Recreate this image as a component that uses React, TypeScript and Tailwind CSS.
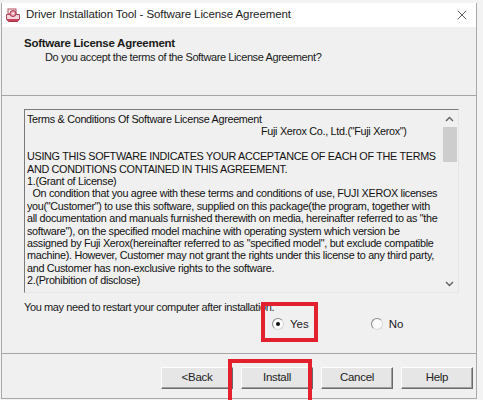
import { X } from 'lucide-react'

const licenseLines = [
  'Terms & Conditions Of Software License Agreement',
  'Fuji Xerox Co., Ltd.("Fuji Xerox")',
  '',
  'USING THIS SOFTWARE INDICATES YOUR ACCEPTANCE OF EACH OF THE TERMS',
  'AND CONDITIONS CONTAINED IN THIS AGREEMENT.',
  '1.(Grant of License)',
  '  On condition that you agree with these terms and conditions of use, FUJI XEROX licenses',
  'you("Customer") to use this software, supplied on this package(the program, together with',
  'all documentation and manuals furnished therewith on media, hereinafter referred to as "the',
  'software"), on the specified model machine with operating system which version be',
  'assigned by Fuji Xerox(hereinafter referred to as "specified model", but exclude compatible',
  'machine). However, Customer may not grant the rights under this license to any third party,',
  'and Customer has non-exclusive rights to the software.',
  '2.(Prohibition of disclose)',
]

function AppIcon() {
  return (
    <svg width="16" height="16" viewBox="0 0 16 16">
      <rect x="3" y="2" width="8" height="5" fill="#fff" stroke="#b0485a" strokeWidth="1" />
      <path d="M1.5 7.5h13v5h-13z" fill="#f4d6dc" stroke="#b0485a" strokeWidth="1" />
      <circle cx="8" cy="6.5" r="3" fill="#e8a0b0" stroke="#a83048" strokeWidth="1" />
      <circle cx="8" cy="6.5" r="0.9" fill="#fff" />
      <path d="M2 12.5l1.5 2h9l1.5-2" fill="#d04060" stroke="#a83048" strokeWidth="1" />
    </svg>
  )
}

function Chevron({ up }: { up?: boolean }) {
  return (
    <svg width="9" height="6" viewBox="0 0 9 6">
      <path
        d={up ? 'M1 5l3.5-3.5L8 5' : 'M1 1l3.5 3.5L8 1'}
        fill="none"
        stroke="#606060"
        strokeWidth="1.4"
      />
    </svg>
  )
}

function RadioDot({ checked }: { checked?: boolean }) {
  return (
    <span className="flex h-[12px] w-[12px] items-center justify-center rounded-full border border-[#8a8a8a] border-b-[#d8d8d8] border-r-[#d8d8d8] bg-[#fafafa]">
      {checked && <span className="h-[4px] w-[4px] rounded-full bg-[#111]" />}
    </span>
  )
}

function WinButton({ label }: { label: string }) {
  return (
    <div className="flex h-[22px] w-[72px] items-center justify-center border border-t-[#fdfdfd] border-l-[#fdfdfd] border-b-[#6a6a6a] border-r-[#6a6a6a] bg-[#e6e6e6] text-[11.5px] tracking-[-0.3px] text-[#222] shadow-[inset_-1px_-1px_0_#a0a0a0]">
      {label}
    </div>
  )
}

export default function App() {
  return (
    <div
      className="relative h-[400px] w-[483px] overflow-hidden bg-[#f3f3f3] pt-[3px] pl-[1px] text-[#1a1a1a]"
      style={{ fontFamily: '"Liberation Sans", Arial, sans-serif' }}
    >
      <div className="flex h-[396px] w-[476px] flex-col border-x border-b border-[#a9a9a9] bg-[#f0f0f0]">
        {/* --- Title bar --- */}
        <div className="flex h-[24px] items-center bg-white pl-[3px] pr-[6px]">
          <AppIcon />
          <span className="ml-[5px] text-[11.5px] tracking-[-0.1px] text-[#222]">
            Driver Installation Tool - Software License Agreement
          </span>
          <X className="ml-auto h-[16px] w-[16px] text-[#333]" strokeWidth={1.2} />
        </div>

        {/* --- Header --- */}
        <div className="flex h-[69px] flex-col border-b border-[#a6a6a6] pl-[22px] pt-[9px]">
          <p className="text-[11.5px] font-bold leading-[14px] tracking-[-0.25px]">
            Software License Agreement
          </p>
          <p className="pl-[21px] text-[11px] leading-[15px] tracking-[-0.4px]">
            Do you accept the terms of the Software License Agreement?
          </p>
        </div>

        {/* --- License text --- */}
        <div className="ml-[22px] mt-[13px] flex h-[184px] w-[435px] border border-t-[#7a7a7a] border-l-[#7a7a7a] border-b-[#e6e6e6] border-r-[#e6e6e6] bg-[#f0f0f0]">
          <div className="flex-1 overflow-hidden pl-[2px] pt-[3px] text-[10.8px] leading-[12.4px] tracking-[-0.3px] text-[#111]">
            {licenseLines.map((line, idx) => (
              <div key={idx} className={`h-[12.4px] whitespace-pre ${idx === 1 ? 'pl-[234px]' : ''}`}>
                {line}
              </div>
            ))}
          </div>
          <div className="flex w-[17px] flex-col items-center bg-[#f0f0f0]">
            <div className="mt-[6px]">
              <Chevron up />
            </div>
            <div className="mt-[5px] h-[35px] w-[14px] bg-[#cdcdcd]" />
            <div className="mt-auto mb-[5px]">
              <Chevron />
            </div>
          </div>
        </div>

        {/* --- Restart option --- */}
        <p className="ml-[22px] mt-[7px] text-[11px] leading-[14px] tracking-[-0.4px]">
          You may need to restart your computer after installation.
        </p>
        <div className="mt-[3px] flex items-center text-[11.5px] leading-[14px]">
          <div className="ml-[270px] flex items-center gap-[6px]">
            <RadioDot checked />
            <span>Yes</span>
          </div>
          <div className="ml-[62px] flex items-center gap-[6px]">
            <RadioDot />
            <span>No</span>
          </div>
        </div>

        {/* --- Buttons --- */}
        <div className="mt-[22px] flex h-[45px] items-start gap-[8px] border-t border-[#a6a6a6] pl-[159px] pt-[13px]">
          <WinButton label="<Back" />
          <WinButton label="Install" />
          <WinButton label="Cancel" />
          <WinButton label="Help" />
        </div>
      </div>

      {/* --- Highlight marks --- */}
      <div className="absolute left-[261px] top-[302px] h-[40px] w-[57px] border-[4px] border-[#e3202e]" />
      <div className="absolute left-[228px] top-[359px] h-[45px] w-[84px] border-[4px] border-[#e3202e]" />
    </div>
  )
}
